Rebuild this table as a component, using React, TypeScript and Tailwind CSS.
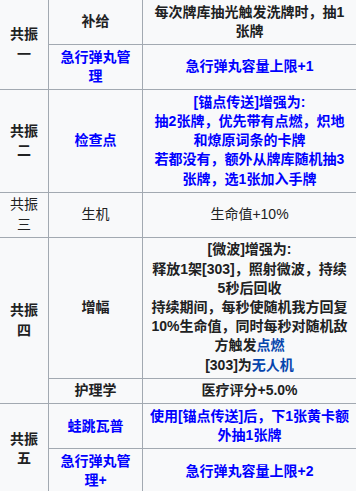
import React from "react";

const cell =
  "border border-[#a2a9b1] px-[5.6px] py-[2.8px] text-center align-middle";

const blue = "text-[#0000ff]";
const link = "text-[#0645ad]";

export default function App() {
  return (
    <div className="w-[356px] h-[491px] overflow-hidden bg-white">
      <table
        className="-ml-px -mt-px w-[357px] table-fixed border-collapse bg-[#f8f9fa] text-[14px] leading-[19.2px] text-[#202122]"
        style={{ fontFamily: '"Liberation Sans", "Noto Sans CJK SC", sans-serif' }}
      >
        <colgroup>
          <col className="w-[49px]" />
          <col className="w-[94px]" />
          <col className="w-[214px]" />
        </colgroup>
        <tbody>
          <tr>
            <td rowSpan={2} className={`${cell} font-bold`}>
              共振
              <br />一
            </td>
            <td className={`${cell} font-bold`}>补给</td>
            <td className={`${cell} font-bold`}>
              每次牌库抽光触发洗牌时，抽1
              <br />
              张牌
            </td>
          </tr>
          <tr>
            <td className={`${cell} font-bold ${blue}`}>
              急行弹丸管
              <br />理
            </td>
            <td className={`${cell} font-bold ${blue}`}>急行弹丸容量上限+1</td>
          </tr>
          <tr>
            <td className={`${cell} font-bold`}>
              共振
              <br />二
            </td>
            <td className={`${cell} font-bold ${blue}`}>检查点</td>
            <td className={`${cell} font-bold ${blue}`}>
              [锚点传送]增强为:
              <br />
              抽2张牌，优先带有点燃，炽地
              <br />
              和燎原词条的卡牌
              <br />
              若都没有，额外从牌库随机抽3
              <br />
              张牌，选1张加入手牌
            </td>
          </tr>
          <tr>
            <td className={cell}>
              共振
              <br />三
            </td>
            <td className={cell}>生机</td>
            <td className={cell}>生命值+10%</td>
          </tr>
          <tr>
            <td rowSpan={2} className={`${cell} font-bold`}>
              共振
              <br />四
            </td>
            <td className={`${cell} font-bold`}>增幅</td>
            <td className={`${cell} font-bold`}>
              [微波]增强为:
              <br />
              释放1架[303]，照射微波，持续
              <br />
              5秒后回收
              <br />
              持续期间，每秒使随机我方回复
              <br />
              10%生命值，同时每秒对随机敌
              <br />
              方触发<span className={link}>点燃</span>
              <br />
              [303]为<span className={link}>无人机</span>
            </td>
          </tr>
          <tr>
            <td className={`${cell} font-bold`}>护理学</td>
            <td className={`${cell} font-bold`}>医疗评分+5.0%</td>
          </tr>
          <tr>
            <td rowSpan={2} className={`${cell} font-bold`}>
              共振
              <br />五
            </td>
            <td className={`${cell} font-bold ${blue}`}>蛙跳瓦普</td>
            <td className={`${cell} font-bold ${blue}`}>
              使用[锚点传送]后，下1张黄卡额
              <br />
              外抽1张牌
            </td>
          </tr>
          <tr>
            <td className={`${cell} font-bold ${blue}`}>
              急行弹丸管
              <br />
              理+
            </td>
            <td className={`${cell} font-bold ${blue}`}>急行弹丸容量上限+2</td>
          </tr>
        </tbody>
      </table>
    </div>
  );
}
